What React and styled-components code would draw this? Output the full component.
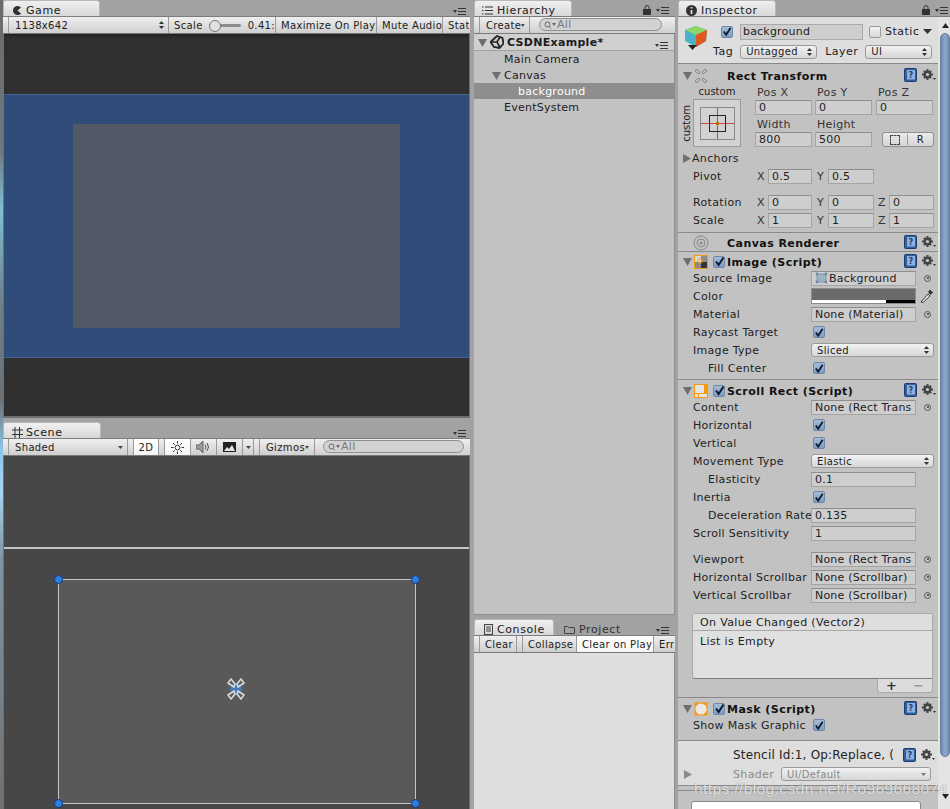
import React from "react";
import styled, { createGlobalStyle } from "styled-components";

const Global = createGlobalStyle`
  html, body { margin: 0; padding: 0; height: 100%; overflow: hidden; background: #a2a2a2; }
  #root { width: 950px; height: 809px; }
  * { box-sizing: border-box; }
`;

const Page = styled.div`
  width: 950px; height: 809px; display: flex; overflow: hidden; position: relative;
  background: #a2a2a2; color: #1c1c1c;
  font-family: "DejaVu Sans", sans-serif; font-size: 11px; letter-spacing: .35px;
`;
const Desktop = styled.div`
  width: 3px; flex: none;
  background: linear-gradient(#6a6a6a 0, #70787c 150px, #7fc0d4 210px, #70808a 300px, #6a7074 400px, #8cc8ec 450px, #a6d6f4 490px, #7f94a4 560px, #707070 809px);
`;
const Column = styled.div`
  width: ${p => p.$w}px; margin-right: ${p => p.$mr || 0}px; flex: none; display: flex; flex-direction: column; min-height: 0;
`;
const TabBar = styled.div`
  height: ${p => p.$h || 17}px; flex: none; display: flex; align-items: flex-end; position: relative; margin-top: ${p => p.$mt || 0}px;
  border-bottom: 1px solid #7d7d7d;
`;
const Tab = styled.div`
  width: ${p => p.$w}px; height: ${p => p.$active ? 16 : 15}px; display: flex; align-items: center; gap: ${p => p.$gap || 4}px; padding: 3px 0 0 ${p => p.$pl || 8}px;
  font-size: 11px; letter-spacing: .6px; color: ${p => p.$active ? "#202020" : "#333"}; border-radius: 3px 3px 0 0;
  background: ${p => p.$active ? "linear-gradient(#f0f0f0,#d8d8d8)" : "transparent"};
  border: ${p => p.$active ? "1px solid #b8b8b8" : "none"}; border-bottom: none;
  svg { flex: none; }
`;
const TabTools = styled.div`
  position: absolute; right: ${p => p.$right ?? 3}px; bottom: 1px; display: flex; align-items: center; gap: 5px;
`;
const Toolbar = styled.div`
  height: 17px; flex: none; display: flex; align-items: stretch; padding-left: ${p => p.$pl || 0}px; overflow: hidden;
  background: linear-gradient(#efefef,#cfcfcf); border-bottom: 1px solid #7a7a7a;
  & > :first-child { border-left: 1px solid #9a9a9a; }
`;
const ToolItem = styled.div`
  width: ${p => p.$w}px; flex: ${p => p.$w ? "none" : "1"}; display: flex; align-items: center; justify-content: ${p => p.$center ? "center" : "flex-start"};
  padding-left: ${p => p.$center ? 0 : (p.$pl ?? 5)}px; padding-right: ${p => p.$pr || 0}px; white-space: nowrap; overflow: hidden;
  font-size: 10px; letter-spacing: .35px; position: relative;
  border-right: 1px solid ${p => p.$noBorder ? "transparent" : "#9a9a9a"};
  background: ${p => p.$on ? "linear-gradient(#fff,#f4f4f4)" : "none"};
`;
const Push = styled.span`flex: 1;`;
const Gap = styled.div`
  width: ${p => p.$w}px; flex: none; border-right: 1px solid #9a9a9a;
`;
const SearchBox = styled.div`
  height: 13px; width: ${p => p.$w}px; margin: 1px 0 0 ${p => p.$ml}px; flex: none; border: 1px solid #8f8f8f; border-radius: 7px;
  background: #d2d2d2; display: flex; align-items: center; padding-left: 4px; font-size: 11px; color: #7a7a7a; letter-spacing: .3px; gap: 1px;
`;
const SliderWrap = styled.div`
  width: 32px; height: 10px; margin: 0 7px 0 6px; flex: none; display: flex; align-items: center; position: relative;
  &::before { content: ""; width: 100%; height: 3px; background: #8d8d8d; border-radius: 2px; }
  &::after { content: ""; position: absolute; left: 0; top: 0; width: 10px; height: 10px; border-radius: 50%; background: #e2e2e2; border: 1px solid #777; }
`;
const GameView = styled.div`
  height: 384px; flex: none; border: 1px solid #707070; border-top: none; border-bottom: 2px solid #6e6e6e; background: #303030; display: flex; flex-direction: column;
  justify-content: center; box-shadow: inset 0 4px 4px -3px #1a1a1a;
`;
const GameBlue = styled.div`
  height: 264px; margin-top: 1px; background: #2f4d78; border: solid #45648f; border-width: 1px 0; display: flex; align-items: center; justify-content: center;
`;
const GameRect = styled.div`
  width: 327px; height: 204px; margin-right: 1px; background: #515a66;
`;
const SceneView = styled.div`
  flex: 1; min-height: 0; background: #474747; position: relative; overflow: hidden; border-left: 1px solid #707070; border-right: 1px solid #707070;
`;
const Horizon = styled.div`
  position: absolute; left: 0; right: 0; top: 91px; height: 2px; background: #c4c4c4;
`;
const RectBox = styled.div`
  position: absolute; left: 54px; top: 123px; width: 358px; height: 225px; background: #595959; border: 1px solid #c5c5c5;
`;
const Handle = styled.div`
  position: absolute; width: 9px; height: 9px; border-radius: 50%; background: #2c7fe0; border: 1px solid #123a80;
  ${p => p.$t ? "top: -5px;" : "bottom: -5px;"} ${p => p.$l ? "left: -5px;" : "right: -5px;"}
`;
const AnchorIcon = styled.svg`
  position: absolute; left: 219px; top: 220px;
`;
const Hierarchy = styled.div`
  height: 581px; flex: none; display: flex; flex-direction: column; background: #c2c2c2; border-right: 1px solid #8f8f8f; border-bottom: 1px solid #8f8f8f;
`;
const SceneHeader = styled.div`
  height: 17px; background: #d0d0d0; border-bottom: 1px solid #a0a0a0; display: flex; align-items: center; padding-left: 4px; gap: 3px;
  font-weight: bold; font-size: 11px; letter-spacing: .3px; position: relative;
`;
const TreeRow = styled.div`
  height: 16px; display: flex; align-items: center; padding-left: ${p => p.$indent}px; gap: 3px; font-size: 11px; letter-spacing: .25px;
  background: ${p => p.$sel ? "#8e8e8e" : "none"}; color: ${p => p.$sel ? "#fff" : "#1c1c1c"};
`;
const Console = styled.div`
  flex: 1; background: #dedede; border-right: 1px solid #8f8f8f;
`;
const Body = styled.div`
  flex: 1; min-height: 0; display: flex; overflow: hidden;
`;
const Sections = styled.div`
  width: 260px; flex: none; display: flex; flex-direction: column; background: #c2c2c2;
`;
const InspectorHead = styled.div`
  height: 47px; flex: none; background: #dedede; border-bottom: 1px solid #8a8a8a; display: grid; grid-template-columns: 37px 1fr; padding: 0 0 0 6px;
`;
const Cube = styled.svg`margin-top: 8px;`;
const HeadStack = styled.div`display: flex; flex-direction: column; gap: 5px; padding-top: 7px;`;
const HeadLine = styled.div`display: flex; align-items: center; height: 15px; font-size: 11px; letter-spacing: .5px;`;
const NameField = styled.div`
  width: 123px; height: 16px; margin: 0 6px 0 7px; padding-left: 2px; background: #cecece; border: 1px solid #a9a9a9; display: flex; align-items: center; font-size: 11px; letter-spacing: .2px;
`;
const StaticLabel = styled.span`margin: 0 4px;`;
const TagLabel = styled.span`margin: 0 7px 0 -8px;`;
const LayerLabel = styled.span`margin: 0 7px 0 8px;`;
const Section = styled.div`
  border-bottom: 1px solid #8a8a8a; height: ${p => p.$h}px; flex: none; padding-top: ${p => p.$pt || 0}px; background: ${p => p.$light ? "#dedede" : "#c2c2c2"}; position: relative;
`;
const SectionHeader = styled.div`
  height: 19px; display: flex; align-items: center; font-weight: bold; font-size: 11px; letter-spacing: .45px; color: #111; position: relative; padding-left: ${p => p.$pl || 5}px;
  svg { flex: none; }
`;
const IconSlot = styled.span`display: flex; margin-left: ${p => p.$ml || 0}px;`;
const HeaderTitle = styled.span`margin-left: ${p => p.$ml || 2}px; padding-top: 2px;`;
const HeaderTools = styled.div`
  position: absolute; right: ${p => p.$right ?? 2}px; top: ${p => p.$top ?? 2}px; display: flex; align-items: center; gap: 5px;
`;
const Row = styled.div`
  height: 18px; display: grid; grid-template-columns: ${p => p.$indent ? 103 : 118}px 105px 1fr; align-items: center; padding-left: ${p => p.$indent ? 30 : 15}px;
  margin-top: ${p => p.$mt || 0}px; color: #222; font-size: 11px; letter-spacing: .3px; white-space: nowrap;
`;
const Field = styled.div`
  height: 15px; padding-left: 3px; background: #cecece; border: 1px solid #a4a4a4; border-top-color: #8e8e8e; border-radius: 1px; display: flex; align-items: center; overflow: hidden; white-space: nowrap; font-size: 11px; color: #222; letter-spacing: .2px;
  gap: 1px;
`;
const Check = styled.div`
  width: 12px; height: 12px; border-radius: 2px; border: 1px solid #6f88a8; background: linear-gradient(#a5bcd8,#7e9cc4); display: flex; align-items: center; justify-content: center; flex: none; margin-left: ${p => p.$ml || 0}px;
`;
const Box = styled.div`
  width: 12px; height: 12px; border-radius: 2px; border: 1px solid #9a9a9a; background: linear-gradient(#f2f2f2,#d8d8d8); flex: none;
`;
const Select = styled.div`
  height: 14px; display: flex; align-items: center; justify-content: space-between; padding: 0 4px 0 5px; width: ${p => p.$w || 123}px; flex: none;
  background: linear-gradient(#f2f2f2,#d6d6d6); border: 1px solid #9a9a9a; border-radius: 3px; font-size: 10px; letter-spacing: .35px;
  color: ${p => p.$dim ? "#888" : "#222"};
`;
const Picker = styled.div`
  width: 7px; height: 7px; margin-left: 8px; border: 1px solid #555; border-radius: 50%; position: relative;
  &::after { content: ""; position: absolute; left: 1.5px; top: 1.5px; width: 2px; height: 2px; background: #333; border-radius: 50%; }
`;
const ColorField = styled.div`
  height: 16px; background: #6b6b6b; border: 1px solid #8a8a8a; display: flex; align-items: flex-end;
`;
const AlphaFill = styled.div`height: 3px; width: ${p => p.$pct}%; background: #fff;`;
const AlphaRest = styled.div`flex: 1; height: 3px; background: #000;`;
const Dropper = styled.svg`margin-left: 4px;`;
const RectGrid = styled.div`
  display: grid; grid-template-columns: 73px 60px 61px 58px; padding-left: 4px;
`;
const AnchorCell = styled.div`grid-row: 1 / span 4; display: flex; flex-direction: column; align-items: flex-end; padding-right: 14px;`;
const AnchorLabel = styled.div`font-size: 10px; letter-spacing: 0; text-align: center; width: 48px; height: 14px; line-height: 14px;`;
const AnchorSide = styled.div`display: flex; align-items: center;`;
const VertLabel = styled.div`writing-mode: vertical-rl; transform: rotate(180deg); font-size: 10px; letter-spacing: 0; width: 13px; display: flex; align-items: center;`;
const AnchorBox = styled.div`
  width: 48px; height: 48px; border: 1px solid #9a9a9a; background: #d2d2d2; display: flex;
`;
const SmallLabel = styled.div`height: 15px; font-size: 11px; letter-spacing: .35px; line-height: 15px; padding-left: 2px; color: #333;`;
const CellField = styled(Field)`width: 57px; margin-bottom: ${p => p.$mb || 0}px;`;
const ConstrainBtn = styled.div`
  width: 52px; height: 15px; margin-left: 6px; display: grid; grid-template-columns: 1fr 1fr; border: 1px solid #8f8f8f; border-radius: 3px; background: linear-gradient(#ececec,#d4d4d4);
  font-size: 10px; align-items: center; justify-items: center;
  & > span:first-child { border-right: 1px solid #9a9a9a; width: 100%; text-align: center; }
`;
const DashSquare = styled.span`
  display: inline-block; width: 10px; height: 10px; border: 1px dashed #444; vertical-align: middle;
`;
const AnchorsRow = styled.div`
  height: 18px; margin-top: 2px; display: flex; align-items: center; gap: 1px; padding-left: 4px; font-size: 11px; letter-spacing: .35px; color: #222;
`;
const TransformRow = styled.div`
  height: 18px; display: grid; grid-template-columns: 64px 11px 44px 16px 46px 15px 45px; padding-left: 15px; align-items: center; margin-top: ${p => p.$mt || 0}px; font-size: 11px; letter-spacing: .35px; color: #222;
`;
const Axis = styled.span`color: #333; width: 11px; justify-self: end;`;
const EventBox = styled.div`
  margin: 9px 5px 0 14px; height: 66px; border: 1px solid #a8a8a8; border-bottom: 1px solid #7f7f7f; border-radius: 3px 3px 0 3px; background: #e0e0e0; font-size: 11px; letter-spacing: .35px; color: #222;
`;
const EventHead = styled.div`
  height: 17px; padding-left: 7px; display: flex; align-items: center; border-bottom: 1px solid #a8a8a8; background: #dedede;
`;
const EventBody = styled.div`padding: 4px 0 0 7px;`;
const EventFoot = styled.div`
  margin: 0 5px 0 auto; width: 56px; height: 14px; background: #dcdcdc; border: 1px solid #aaa; border-top: none; border-radius: 0 0 3px 3px; display: flex; justify-content: space-around; align-items: center; font-size: 13px; font-weight: bold; color: #333; letter-spacing: 0;
`;
const MinusSign = styled.span`color: #999;`;
const Stencil = styled.div`
  height: 18px; padding-left: 55px; font-size: 12px; letter-spacing: .2px; color: #222; display: flex; align-items: center; white-space: nowrap; width: 222px;
`;
const ShaderRow = styled.div`
  height: 18px; margin-top: 1px; display: flex; align-items: center; padding-left: 5px; color: #8a8a8a; font-size: 11px; letter-spacing: .35px;
`;
const ShaderLabel = styled.span`margin: 0 7px 0 41px;`;
const SectionGap = styled.div`height: 5px; flex: none; border-bottom: 1px solid #8a8a8a;`;
const Footer = styled.div`
  margin: 10px 0 0 13px; width: 230px; height: 20px; flex: none; background: #fff; border: 1px solid #8a8a8a; border-radius: 3px;
`;
const Scrollbar = styled.div`
  width: 12px; flex: none; padding: 0 0 5px 2px; display: flex; flex-direction: column; align-items: center; background: #e4e4e4;
`;
const ScrollArrow = styled.div`
  height: 16px; flex: none; display: flex; align-items: center; justify-content: center;
`;
const Thumb = styled.div`
  width: 100%; height: ${p => p.$h}px; flex: none; border-radius: 5px; background: linear-gradient(90deg,#6e8bb4,#8fa9cc 50%,#6e8bb4); border: 1px solid #6c7f9a;
`;
const Watermark = styled.div`
  position: absolute; left: 694px; top: 780px; font-family: "Liberation Sans", sans-serif; font-size: 15.5px; letter-spacing: .4px; color: rgba(255,255,255,.8); white-space: nowrap; text-shadow: 0 0 1px rgba(70,70,70,.7);
`;

const Menu = () => (
  <svg width="14" height="7" viewBox="0 0 14 7">
    <path d="M0 2h4L2 5z" fill="#333" />
    <path d="M5 .5h8M5 3.5h8M5 6.5h8" stroke="#333" />
  </svg>
);
const Lock = () => (
  <svg width="8" height="10" viewBox="0 0 8 10">
    <path d="M2 4V2.5a2 2 0 0 1 4 0V4" stroke="#333" fill="none" />
    <rect y="4" width="8" height="6" fill="#333" />
  </svg>
);
const Updown = () => (
  <svg width="5" height="8" viewBox="0 0 5 8"><path d="M2.5 0 5 3H0zM2.5 8 0 5h5z" fill="#333" /></svg>
);
const Down = ({ c = "#444", w = 5, h = 3 }) => (
  <svg width={w} height={h} viewBox="0 0 5 3" preserveAspectRatio="none"><path d="M0 0h5L2.5 3z" fill={c} /></svg>
);
const Fold = ({ open = true, c = "#6f6f6f" }) => (
  <svg width="9" height="9" viewBox="0 0 9 9">
    <path d={open ? "M0 1h9L4.5 9z" : "M1 0l8 4.5L1 9z"} fill={c} />
  </svg>
);
const Tick = () => (
  <svg width="11" height="11" viewBox="0 0 11 11"><path d="M2 5.5 4.6 9 9.5 1.5" stroke="#0c1a30" strokeWidth="2" fill="none" /></svg>
);
const Help = () => (
  <svg width="13" height="14" viewBox="0 0 13 14">
    <rect x=".5" y=".5" width="12" height="13" rx="1" fill="#2f5f9f" stroke="#1e3d6e" />
    <rect x="3" y="2" width="8" height="9.5" fill="#8fb0dc" />
    <text x="7" y="10" fontSize="8" fontWeight="bold" fill="#1e3d6e" textAnchor="middle" fontFamily="DejaVu Sans">?</text>
  </svg>
);
const Gear = () => (
  <svg width="14" height="12" viewBox="0 0 14 12">
    <g fill="#444">
      <circle cx="5.5" cy="5.5" r="4" />
      <path d="M4.5 0h2v2h-2zM4.5 9h2v2h-2zM0 4.5h2v2H0zM9 4.5h2v2H9zM1.2 2.6 2.6 1.2 4 2.6 2.6 4zM7 8.4 8.4 7l1.4 1.4-1.4 1.4zM8.4 1.2l1.4 1.4L8.4 4 7 2.6zM2.6 7 4 8.4 2.6 9.8 1.2 8.4z" />
    </g>
    <circle cx="5.5" cy="5.5" r="1.6" fill="#c8c8c8" />
    <path d="M11 9h3l-1.5 2z" fill="#333" />
  </svg>
);
const SectionTools = () => <HeaderTools><Help /><Gear /></HeaderTools>;
const Magnifier = () => (
  <svg width="12" height="8" viewBox="0 0 12 8">
    <circle cx="3.5" cy="3.5" r="2.5" stroke="#666" fill="none" />
    <path d="m5 5.5 2 2" stroke="#666" />
    <path d="M8 2h4l-2 3z" fill="#666" />
  </svg>
);
const UnityLogo = () => (
  <svg width="14" height="14" viewBox="0 0 14 14">
    <path d="M7 1 12.5 3l1 5.5-4 4.5-5.5-1L.5 7z" fill="none" stroke="#222" strokeWidth="1.8" />
    <path d="M1 7h6l3-5M7 7l3 5.5" stroke="#222" strokeWidth="1.6" fill="none" />
  </svg>
);
const Orange = ({ children }) => (
  <svg width="14" height="14" viewBox="0 0 14 14">{children}</svg>
);
const TextRow = ({ label, value, picker, indent, mt }) => (
  <Row $indent={indent} $mt={mt}>
    <span>{label}</span>
    <Field>{value}</Field>
    {picker ? <Picker /> : <span />}
  </Row>
);
const CheckRow = ({ label, indent, mt }) => (
  <Row $indent={indent} $mt={mt}><span>{label}</span><Check $ml={2}><Tick /></Check></Row>
);
const SelectRow = ({ label, value }) => (
  <Row><span>{label}</span><Select>{value}<Updown /></Select></Row>
);
const Script = ({ icon, title }) => (
  <SectionHeader>
    <Fold />
    <IconSlot $ml={2}><Orange>{icon}</Orange></IconSlot>
    <Check $ml={5}><Tick /></Check>
    <HeaderTitle>{title}</HeaderTitle>
    <SectionTools />
  </SectionHeader>
);

export default function App() {
  return (
    <Page>
      <Global />
      <Desktop />
      <Column $w={467} $mr={4}>
        <TabBar>
          <Tab $active $w={97} $gap={3}>
            <svg width="11" height="11" viewBox="0 0 11 11"><path d="M9 2.5A4.6 4.6 0 1 0 9 8.5L5.5 5.5z" fill="#333" /></svg>
            Game
          </Tab>
          <TabTools><Menu /></TabTools>
        </TabBar>
        <Toolbar $pl={5}>
          <ToolItem $w={161} $pr={4} $pl={6}>1138x642<Push /><Updown /></ToolItem>
          <ToolItem $w={107}>Scale<SliderWrap />0.41:</ToolItem>
          <ToolItem $w={101}>Maximize On Play</ToolItem>
          <ToolItem $w={66}>Mute Audio</ToolItem>
          <ToolItem $noBorder>Stat</ToolItem>
        </Toolbar>
        <GameView>
          <GameBlue><GameRect /></GameBlue>
        </GameView>
        <TabBar $mt={3} $h={18}>
          <Tab $active $w={98} $gap={3}>
            <svg width="11" height="11" viewBox="0 0 11 11"><path d="M3 0v11M7.5 0v11M0 3h11M0 7.5h11" stroke="#333" /></svg>
            Scene
          </Tab>
          <TabTools><Menu /></TabTools>
        </TabBar>
        <Toolbar $pl={5}>
          <ToolItem $w={120} $pr={4} $pl={6}>Shaded<Push /><Down /></ToolItem>
          <Gap $w={6} />
          <ToolItem $w={25} $on $center>2D</ToolItem>
          <Gap $w={6} />
          <ToolItem $w={26} $on $center>
            <svg width="13" height="13" viewBox="0 0 13 13"><circle cx="6.5" cy="6.5" r="2.4" fill="none" stroke="#333" /><path d="M6.5 0v2.5M6.5 10.5V13M0 6.5h2.5M10.5 6.5H13M2 2l1.7 1.7M9.3 9.3 11 11M11 2 9.3 3.7M3.7 9.3 2 11" stroke="#333" /></svg>
          </ToolItem>
          <ToolItem $w={26} $center>
            <svg width="15" height="12" viewBox="0 0 15 12"><path d="M0 4h3l4-4v12L3 8H0z" fill="#9a9a9a" stroke="#666" /><path d="M9 3.5q2 2.5 0 5M11 2q3 4 0 8" stroke="#555" fill="none" /></svg>
          </ToolItem>
          <ToolItem $w={26} $center>
            <svg width="13" height="10" viewBox="0 0 13 10"><rect width="13" height="10" fill="#222" /><path d="M1 9l3-4 2 2 3-4 3 6z" fill="#e4e4e4" /></svg>
          </ToolItem>
          <ToolItem $w={11} $center><Down /></ToolItem>
          <Gap $w={6} />
          <ToolItem $w={55} $pr={5} $pl={6}>Gizmos<Push /><Down /></ToolItem>
          <SearchBox $w={141} $ml={8}><Magnifier />All</SearchBox>
        </Toolbar>
        <SceneView>
          <Horizon />
          <RectBox>
            <Handle $t $l /><Handle $t /><Handle $l /><Handle />
          </RectBox>
          <AnchorIcon width="26" height="26" viewBox="0 0 26 26">
            <circle cx="13" cy="13" r="6" fill="#3f7fc8" opacity=".85" />
            <g fill="none" stroke="#d8d8d8" strokeWidth="1.6">
              <path d="M11 11 5 7l3-4 4 5z" />
              <path d="M15 11l6-4-3-4-4 5z" />
              <path d="M11 15l-6 4 3 4 4-5z" />
              <path d="M15 15l6 4-3 4-4-5z" />
            </g>
          </AnchorIcon>
        </SceneView>
      </Column>
      <Column $w={201} $mr={3}>
        <TabBar>
          <Tab $active $w={98} $pl={7}>
            <svg width="11" height="9" viewBox="0 0 11 9"><path d="M3 1h8M3 4.5h8M3 8h8M0 1h1.5M0 4.5h1.5M0 8h1.5" stroke="#333" /></svg>
            Hierarchy
          </Tab>
          <TabTools $right={5}><Lock /><Menu /></TabTools>
        </TabBar>
        <Toolbar $pl={5}>
          <ToolItem $w={51} $pr={4} $pl={6}>Create<Push /><Down /></ToolItem>
          <SearchBox $w={123} $ml={9}><Magnifier />All</SearchBox>
        </Toolbar>
        <Hierarchy>
          <SceneHeader>
            <Fold /><UnityLogo />CSDNExample*
            <TabTools $right={5}><Menu /></TabTools>
          </SceneHeader>
          <TreeRow $indent={30}>Main Camera</TreeRow>
          <TreeRow $indent={18}><Fold />Canvas</TreeRow>
          <TreeRow $indent={44} $sel>background</TreeRow>
          <TreeRow $indent={30}>EventSystem</TreeRow>
        </Hierarchy>
        <TabBar $mt={4}>
          <Tab $active $w={80} $pl={9}>
            <svg width="9" height="11" viewBox="0 0 9 11"><rect x=".5" y=".5" width="8" height="10" fill="none" stroke="#444" /><path d="M2 3h5M2 5h5M2 7h5" stroke="#444" /></svg>
            Console
          </Tab>
          <Tab $w={80} $pl={10}>
            <svg width="11" height="9" viewBox="0 0 11 9"><path d="M.5 1.5h3l1 1h6v6H.5z" fill="none" stroke="#444" /></svg>
            Project
          </Tab>
          <TabTools $right={5}><Menu /></TabTools>
        </TabBar>
        <Toolbar $pl={5}>
          <ToolItem $w={38} $pl={5}>Clear</ToolItem>
          <Gap $w={6} />
          <ToolItem $w={54}>Collapse</ToolItem>
          <ToolItem $w={77} $on>Clear on Play</ToolItem>
          <ToolItem $noBorder>Err</ToolItem>
        </Toolbar>
        <Console />
      </Column>
      <Column $w={272}>
        <TabBar>
          <Tab $active $w={98} $pl={7}>
            <svg width="11" height="11" viewBox="0 0 11 11"><circle cx="5.5" cy="5.5" r="5.5" fill="#333" /><path d="M5.5 2v1.5M5.5 5v4" stroke="#eee" strokeWidth="1.6" /></svg>
            Inspector
          </Tab>
          <TabTools $right={1}><Lock /><Menu /></TabTools>
        </TabBar>
        <Body>
          <Sections>
            <InspectorHead>
              <Cube width="24" height="26" viewBox="0 0 24 26">
                <path d="M1 5 12 1l11 4-1 11-10 6-11-6z" fill="#48b4c8" />
                <path d="M1 5 12 1l11 4-11 5z" fill="#8ed66a" />
                <path d="M12 10l11-5-1 11-10 6z" fill="#e0581e" />
                <path d="M4 20h9l-4.5 5z" fill="#222" />
              </Cube>
              <HeadStack>
                <HeadLine>
                  <Check><Tick /></Check>
                  <NameField>background</NameField>
                  <Box />
                  <StaticLabel>Static</StaticLabel>
                  <Down c="#333" w={9} h={5} />
                </HeadLine>
                <HeadLine>
                  <TagLabel>Tag</TagLabel>
                  <Select $w={77}>Untagged<Updown /></Select>
                  <LayerLabel>Layer</LayerLabel>
                  <Select $w={67}>UI<Updown /></Select>
                </HeadLine>
              </HeadStack>
            </InspectorHead>
            <Section $h={169} $pt={2}>
              <SectionHeader>
                <Fold />
                <IconSlot $ml={1}>
                  <svg width="16" height="16" viewBox="0 0 16 16"><g fill="none" stroke="#888"><path d="M6 6 2 3l2-2 3 3zM10 6l4-3-2-2-3 3zM6 10l-4 3 2 2 3-3zM10 10l4 3-2 2-3-3z" /></g></svg>
                </IconSlot>
                <HeaderTitle $ml={18}>Rect Transform</HeaderTitle>
                <SectionTools />
              </SectionHeader>
              <RectGrid>
                <AnchorCell>
                  <AnchorLabel>custom</AnchorLabel>
                  <AnchorSide>
                    <VertLabel>custom</VertLabel>
                    <AnchorBox>
                      <svg width="46" height="46" viewBox="0 0 46 46">
                        <rect x="6.5" y="7.5" width="34" height="32" fill="#d2d2d2" stroke="#8a8a8a" />
                        <path d="M23.5 8v31M7 23.5h33" stroke="#c44" />
                        <rect x="15.5" y="15.5" width="16" height="16" fill="none" stroke="#222" />
                        <rect x="22" y="22" width="3" height="3" fill="#b87008" />
                      </svg>
                    </AnchorBox>
                  </AnchorSide>
                </AnchorCell>
                <SmallLabel>Pos X</SmallLabel><SmallLabel>Pos Y</SmallLabel><SmallLabel>Pos Z</SmallLabel>
                <CellField $mb={2}>0</CellField><CellField $mb={2}>0</CellField><CellField $mb={2}>0</CellField>
                <SmallLabel>Width</SmallLabel><SmallLabel>Height</SmallLabel><span />
                <CellField>800</CellField><CellField>500</CellField>
                <ConstrainBtn><span><DashSquare /></span><span>R</span></ConstrainBtn>
              </RectGrid>
              <AnchorsRow><Fold open={false} />Anchors</AnchorsRow>
              <TransformRow><span>Pivot</span><Axis>X</Axis><Field>0.5</Field><Axis>Y</Axis><Field>0.5</Field></TransformRow>
              <TransformRow $mt={8}><span>Rotation</span><Axis>X</Axis><Field>0</Field><Axis>Y</Axis><Field>0</Field><Axis>Z</Axis><Field>0</Field></TransformRow>
              <TransformRow><span>Scale</span><Axis>X</Axis><Field>1</Field><Axis>Y</Axis><Field>1</Field><Axis>Z</Axis><Field>1</Field></TransformRow>
            </Section>
            <Section $h={19}>
              <SectionHeader $pl={15}>
                <svg width="16" height="16" viewBox="0 0 16 16"><g fill="none" stroke="#888"><circle cx="8" cy="8" r="7" /><circle cx="8" cy="8" r="4" /></g><circle cx="8" cy="8" r="1.5" fill="#888" /></svg>
                <HeaderTitle $ml={18}>Canvas Renderer</HeaderTitle>
                <SectionTools />
              </SectionHeader>
            </Section>
            <Section $h={128}>
              <Script
                title="Image (Script)"
                icon={<><rect x=".5" y=".5" width="13" height="13" fill="#8a8a8a" stroke="#f59a10" /><rect x="1" y="1" width="6" height="6" fill="#d8d8d8" /><rect x="7" y="7" width="6" height="6" fill="#333" /><circle cx="6" cy="6" r="2.4" fill="none" stroke="#f59a10" /></>}
              />
              <Row $mt={-2}>
                <span>Source Image</span>
                <Field>
                  <svg width="13" height="12" viewBox="0 0 13 12"><rect x="2" y="2" width="9" height="8" fill="#9fb3c4" stroke="#7e97ab" /><circle cx="2" cy="2" r="1.4" fill="#6a8ba8" /><circle cx="11" cy="2" r="1.4" fill="#6a8ba8" /><circle cx="2" cy="10" r="1.4" fill="#6a8ba8" /><circle cx="11" cy="10" r="1.4" fill="#6a8ba8" /></svg>
                  Background
                </Field>
                <Picker />
              </Row>
              <Row>
                <span>Color</span>
                <ColorField><AlphaFill $pct={72} /><AlphaRest /></ColorField>
                <Dropper width="13" height="14" viewBox="0 0 13 14"><path d="M1 13 8 5l2 2-7 6.5z" fill="#eee" stroke="#333" /><path d="M8 3l2-2.5 3 3L10.5 6z" fill="#333" /></Dropper>
              </Row>
              <TextRow label="Material" value="None (Material)" picker />
              <CheckRow label="Raycast Target" />
              <SelectRow label="Image Type" value="Sliced" />
              <CheckRow label="Fill Center" indent />
            </Section>
            <Section $h={318} $pt={1}>
              <Script
                title="Scroll Rect (Script)"
                icon={<><rect x=".5" y=".5" width="13" height="13" fill="#e4e4e4" stroke="#f59a10" /><path d="M.5 9.5h13M4.5 9.5v4" stroke="#f59a10" /><rect x="10" y="1" width="3" height="8" fill="#f59a10" /></>}
              />
              <TextRow label="Content" value="None (Rect Trans" picker mt={-2} />
              <CheckRow label="Horizontal" />
              <CheckRow label="Vertical" />
              <SelectRow label="Movement Type" value="Elastic" />
              <TextRow label="Elasticity" value="0.1" indent />
              <CheckRow label="Inertia" />
              <TextRow label="Deceleration Rate" value="0.135" indent />
              <TextRow label="Scroll Sensitivity" value="1" />
              <TextRow label="Viewport" value="None (Rect Trans" picker mt={8} />
              <TextRow label="Horizontal Scrollbar" value="None (Scrollbar)" picker />
              <TextRow label="Vertical Scrollbar" value="None (Scrollbar)" picker />
              <EventBox>
                <EventHead>On Value Changed (Vector2)</EventHead>
                <EventBody>List is Empty</EventBody>
              </EventBox>
              <EventFoot><span>+</span><MinusSign>−</MinusSign></EventFoot>
            </Section>
            <Section $h={43} $pt={1}>
              <Script
                title="Mask (Script)"
                icon={<><rect x=".5" y=".5" width="13" height="13" fill="#f59a10" /><circle cx="7" cy="7" r="5.6" fill="#e8e8e8" /></>}
              />
              <CheckRow label="Show Mask Graphic" mt={-2} />
            </Section>
            <Section $h={45} $light $pt={5}>
              <Stencil>Stencil Id:1, Op:Replace, (</Stencil>
              <HeaderTools $top={7} $right={3}><Help /><Gear /></HeaderTools>
              <ShaderRow><Fold open={false} c="#8a8a8a" /><ShaderLabel>Shader</ShaderLabel><Select $w={150} $dim>UI/Default<Down c="#777" /></Select></ShaderRow>
            </Section>
            <SectionGap />
            <Footer />
          </Sections>
          <Scrollbar>
            <ScrollArrow><svg width="7" height="5" viewBox="0 0 7 5"><path d="M3.5 0 7 5H0z" fill="#222" /></svg></ScrollArrow>
            <Thumb $h={724} />
            <Push />
            <ScrollArrow><svg width="7" height="5" viewBox="0 0 7 5"><path d="M0 0h7L3.5 5z" fill="#222" /></svg></ScrollArrow>
          </Scrollbar>
        </Body>
      </Column>
      <Watermark>https://blog.csdn.net/Ro969668074</Watermark>
    </Page>
  );
}
